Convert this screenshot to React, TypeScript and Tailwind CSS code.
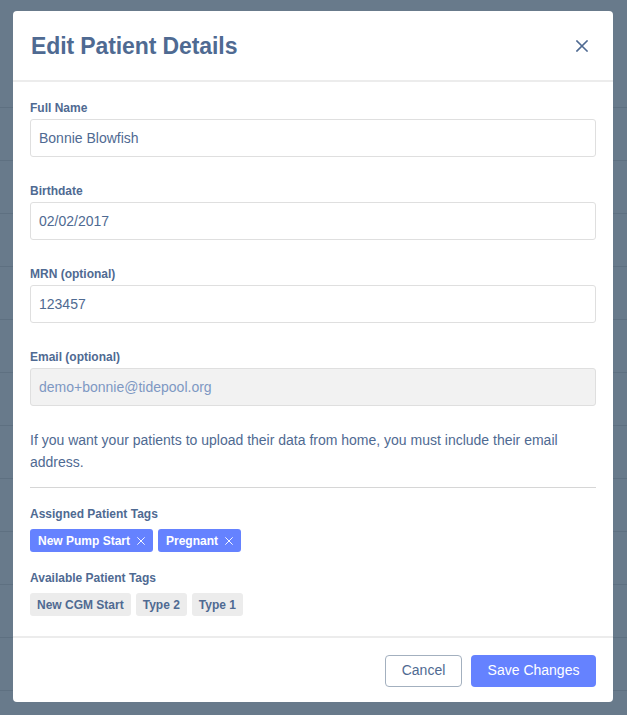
import React from "react";

const font = { fontFamily: '"Liberation Sans", Arial, sans-serif' };

function XIcon({ size, stroke, className }: { size: number; stroke: number; className?: string }) {
  return (
    <svg width={size} height={size} viewBox="0 0 12 12" className={className} fill="none">
      <path d="M1 1L11 11M11 1L1 11" stroke="currentColor" strokeWidth={stroke} strokeLinecap="square" />
    </svg>
  );
}

function Field({ label, value, disabled }: { label: string; value: string; disabled?: boolean }) {
  return (
    <div className="flex flex-col">
      <div className="text-[12px] leading-4 font-bold text-[#4f6a92] mb-[3px]">{label}</div>
      <div
        className={
          "h-[38px] rounded-[3px] border border-[#dfdfdf] px-[8px] flex items-center text-[14px] " +
          (disabled ? "bg-[#f2f2f2] text-[#7e98c3]" : "bg-white text-[#4f6a92]")
        }
      >
        {value}
      </div>
    </div>
  );
}

export default function App() {
  const rows = Array.from({ length: 14 });
  return (
    <div className="relative w-[627px] h-[715px] overflow-hidden bg-[#687a8b]" style={font}>
      <div className="flex flex-col pt-[55px]">
        {rows.map((_, i) => (
          <div key={i} className="h-[53px] border-b border-[#5e7081]" />
        ))}
      </div>
      <div className="absolute left-[13px] top-[11px] w-[600px] h-[691px] bg-white rounded-[4px] flex flex-col">
        <div className="h-[71px] border-b-2 border-[#ececec] flex items-center justify-between pl-[18px] pr-[25px] shrink-0">
          <div className="text-[23px] font-bold text-[#4f6a92] tracking-[-0.1px] mt-[1px]">Edit Patient Details</div>
          <XIcon size={12} stroke={1.6} className="text-[#4f6a92]" />
        </div>
        <div className="flex flex-col px-[17px] pt-[18px] flex-1">
          <div className="flex flex-col gap-[26px]">
            <Field label="Full Name" value="Bonnie Blowfish" />
            <Field label="Birthdate" value="02/02/2017" />
            <Field label="MRN (optional)" value="123457" />
            <Field label="Email (optional)" value="demo+bonnie@tidepool.org" disabled />
          </div>
          <p className="mt-[23px] text-[14px] leading-[22px] text-[#4f6a92]">
            If you want your patients to upload their data from home, you must include their email address.
          </p>
          <div className="mt-[14px] h-px bg-[#d6d6d6]" />
          <div className="mt-[18px] text-[12px] leading-4 font-bold text-[#4f6a92]">Assigned Patient Tags</div>
          <div className="mt-[7px] flex gap-[5px]">
            {["New Pump Start", "Pregnant"].map((t) => (
              <div key={t} className="h-[23px] rounded-[3px] bg-[#6582ff] text-white text-[12px] font-bold flex items-center gap-[7px] pl-[8px] pr-[8px]">
                {t}
                <XIcon size={8} stroke={1.4} />
              </div>
            ))}
          </div>
          <div className="mt-[18px] text-[12px] leading-4 font-bold text-[#4f6a92]">Available Patient Tags</div>
          <div className="mt-[7px] flex gap-[5px]">
            {["New CGM Start", "Type 2", "Type 1"].map((t) => (
              <div key={t} className="h-[23px] rounded-[3px] bg-[#ececec] text-[#4f6a92] text-[12px] font-bold flex items-center px-[7px]">
                {t}
              </div>
            ))}
          </div>
        </div>
        <div className="border-t-2 border-[#ececec] h-[66px] shrink-0 flex items-center justify-end gap-[9px] pr-[17px] pt-[1px]">
          <button className="h-[32px] w-[77px] rounded-[4px] border border-[#a3b0bf] text-[14px] text-[#4f6a92] bg-white">Cancel</button>
          <button className="h-[32px] w-[125px] rounded-[4px] bg-[#6582ff] text-[14px] text-white">Save Changes</button>
        </div>
      </div>
    </div>
  );
}
